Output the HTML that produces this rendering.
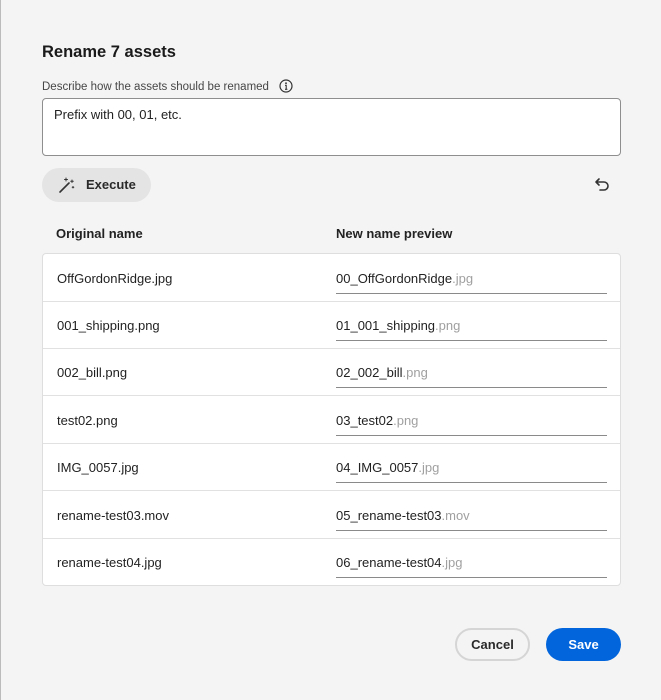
<!DOCTYPE html>
<html><head><style>
*{margin:0;padding:0;box-sizing:border-box}
body{width:661px;height:700px;background:#f4f4f4;font-family:"Liberation Sans",sans-serif;color:#222;position:relative;overflow:hidden}
.abs{position:absolute}
h1{position:absolute;left:42px;top:43px;font-size:16.5px;font-weight:bold;color:#1a1a1a}
.lbl{left:42px;top:79px;font-size:11.5px;color:#464646}
.ta{left:42px;top:98px;width:579px;height:58px;background:#fff;border:1px solid #8e8e8e;border-radius:4px;padding:8px 11px;font-size:13px}
.exec{left:42px;top:168px;width:109px;height:34px;background:#e4e4e4;border-radius:17px;font-size:13px;font-weight:bold;color:#2a2a2a}
.th{top:226px;font-size:13px;font-weight:bold;color:#222}
.tbl{left:42px;top:253px;width:579px;height:333px;background:#fff;border:1px solid #dedede;border-radius:4px}
.row{position:absolute;left:0;width:577px;height:48px;border-bottom:1px solid #e1e1e1;font-size:13px}
.row.last{border-bottom:none}
.o{position:absolute;left:14px;top:17px}
.n{position:absolute;left:293px;top:17px}
.n span{color:#a0a0a0}
.u{position:absolute;left:293px;width:271px;top:39px;height:1px;background:#8a8a8a}
.btn{top:628px;height:33px;border-radius:17px;font-size:13px;font-weight:bold;text-align:center;line-height:29px}
</style></head><body>
<div class="abs" style="left:0;top:0;width:1px;height:700px;background:#bbb"></div>
<h1>Rename 7 assets</h1>
<div class="abs lbl">Describe how the assets should be renamed
<svg style="vertical-align:-3px;margin-left:7px" width="14" height="14" viewBox="0 0 14 14"><circle cx="7" cy="7" r="6" fill="none" stroke="#333" stroke-width="1.2"/><circle cx="7" cy="4.2" r="0.9" fill="#333"/><path d="M6 6.3h1.2v4M6 10.3h2.4" stroke="#333" stroke-width="1.1" fill="none"/></svg></div>
<div class="abs ta">Prefix with 00, 01, etc.</div>
<div class="abs exec">
<svg class="abs" style="left:16px;top:8px" width="18" height="18" viewBox="0 0 18 18"><path d="M2 16L11 7" stroke="#333" stroke-width="1.6" stroke-linecap="round"/><path d="M8 2v3M6.5 3.5h3M14 4v2.5M12.7 5.2h2.6M15 10.5v1.5M14.2 11.2h1.6" stroke="#333" stroke-width="1" stroke-linecap="round"/></svg>
<span class="abs" style="left:44px;top:9px">Execute</span></div>
<svg class="abs" style="left:594px;top:177px" width="18" height="16" viewBox="0 0 18 16"><path d="M5 2L2 5l3 3M2 5h8a4 4 0 0 1 0 8H6" fill="none" stroke="#333" stroke-width="1.6" stroke-linecap="round" stroke-linejoin="round"/></svg>
<div class="abs th" style="left:56px">Original name</div>
<div class="abs th" style="left:336px">New name preview</div>
<div class="abs tbl">
<div class="row" style="top:0"><div class="o">OffGordonRidge.jpg</div><div class="n">00_OffGordonRidge<span>.jpg</span></div><div class="u"></div></div>
<div class="row" style="top:47px"><div class="o">001_shipping.png</div><div class="n">01_001_shipping<span>.png</span></div><div class="u"></div></div>
<div class="row" style="top:94px"><div class="o">002_bill.png</div><div class="n">02_002_bill<span>.png</span></div><div class="u"></div></div>
<div class="row" style="top:142px"><div class="o">test02.png</div><div class="n">03_test02<span>.png</span></div><div class="u"></div></div>
<div class="row" style="top:189px"><div class="o">IMG_0057.jpg</div><div class="n">04_IMG_0057<span>.jpg</span></div><div class="u"></div></div>
<div class="row" style="top:237px"><div class="o">rename-test03.mov</div><div class="n">05_rename-test03<span>.mov</span></div><div class="u"></div></div>
<div class="row last" style="top:284px"><div class="o">rename-test04.jpg</div><div class="n">06_rename-test04<span>.jpg</span></div><div class="u"></div></div>
</div>
<div class="abs btn" style="left:455px;width:75px;border:2px solid #d5d5d5;color:#2a2a2a">Cancel</div>
<div class="abs btn" style="left:546px;width:75px;background:#0265dc;color:#fff;line-height:33px">Save</div>
</body></html>
